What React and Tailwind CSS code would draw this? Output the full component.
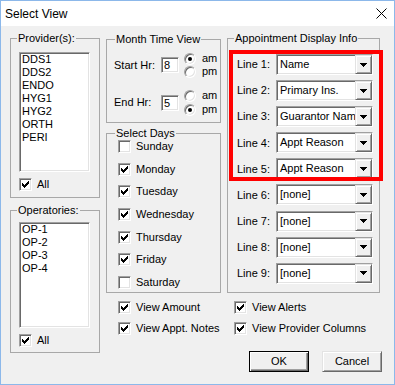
import React from "react";

const sunken =
  "border border-t-[#a0a0a0] border-l-[#a0a0a0] border-r-white border-b-white shadow-[inset_1px_1px_0_#696969,inset_-1px_-1px_0_#e3e3e3] bg-white";
const raised =
  "border border-t-[#e3e3e3] border-l-[#e3e3e3] border-r-[#696969] border-b-[#696969] shadow-[inset_1px_1px_0_#ffffff,inset_-1px_-1px_0_#a0a0a0] bg-[#f0f0f0]";

// classic 7x7 check glyph, pixel rows
const checkRows = [
  [6, 1],
  [5, 2],
  [0, 1, 4, 3],
  [0, 2, 3, 3],
  [0, 5],
  [1, 3],
  [2, 1],
];

function Check({ checked }) {
  return (
    <span className={`w-[13px] h-[13px] shrink-0 flex items-center justify-center ${sunken}`}>
      {checked && (
        <svg width="7" height="7" viewBox="0 0 7 7" shapeRendering="crispEdges">
          {checkRows.map((r, y) => (
            <g key={y}>
              <rect x={r[0]} y={y} width={r[1]} height="1" fill="#000" />
              {r.length > 2 && <rect x={r[2]} y={y} width={r[3]} height="1" fill="#000" />}
            </g>
          ))}
        </svg>
      )}
    </span>
  );
}

function CheckRow({ checked, label }) {
  return (
    <div className="flex items-center gap-[5px] h-[13px]">
      <Check checked={checked} />
      <span className="leading-[13px]">{label}</span>
    </div>
  );
}

function Radio({ checked, label }) {
  return (
    <div className="flex items-center gap-[6px] h-[13px]">
      <span className="w-[12px] h-[12px] shrink-0 rounded-full border border-t-[#a0a0a0] border-l-[#a0a0a0] border-r-white border-b-white bg-white shadow-[inset_1px_1px_0_#696969,inset_-1px_-1px_0_#e3e3e3] flex items-center justify-center">
        {checked && <span className="w-[4px] h-[4px] rounded-full bg-black" />}
      </span>
      <span className="leading-[13px]">{label}</span>
    </div>
  );
}

function Combo({ label, value }) {
  return (
    <div className="flex items-center h-[21px]">
      <span className="w-[39px] shrink-0">{label}</span>
      <div className={`w-[97px] h-[21px] flex ${sunken}`}>
        <div className="flex-1 overflow-hidden whitespace-nowrap pl-[3px] leading-[19px]">{value}</div>
        <div className={`w-[17px] h-full shrink-0 flex items-center justify-center ${raised}`}>
          <svg width="7" height="4" viewBox="0 0 7 4" shapeRendering="crispEdges">
            <path d="M0 0H7L3.5 4Z" fill="#000" />
          </svg>
        </div>
      </div>
    </div>
  );
}

function ListBox({ items, height }) {
  return (
    <div className={`w-[71px] ${height} ${sunken} px-[2px]`}>
      {items.map((it) => (
        <div key={it} className="leading-[13px]">
          {it}
        </div>
      ))}
    </div>
  );
}

export default function App() {
  return (
    <div className="w-[395px] h-[385px] border border-[#8cb8ea] flex flex-col text-[11px] text-black font-['Liberation_Sans',Arial,sans-serif] overflow-hidden">
      {/* title bar */}
      <div className="h-[25px] bg-white flex items-center justify-between pl-[4px] pr-[7px]">
        <span className="text-[12px]">Select View</span>
        <svg width="11" height="11" viewBox="0 0 11 11">
          <path d="M0.5 0.5L10.5 10.5M10.5 0.5L0.5 10.5" stroke="#000" strokeWidth="1" />
        </svg>
      </div>

      {/* body */}
      <div className="flex-1 bg-[#f0f0f0] flex pl-[9px]">
        {/* left column */}
        <div className="w-[90px] flex flex-col">
          <fieldset className="mt-[6px] h-[166px] border border-[#a8a8a8] pl-[8px] pt-[7px]">
            <legend className="ml-[-2px] px-[1px] leading-[13px]">Provider(s):</legend>
            <ListBox items={["DDS1", "DDS2", "ENDO", "HYG1", "HYG2", "ORTH", "PERI"]} height="h-[120px]" />
            <div className="mt-[6px]">
              <CheckRow checked label="All" />
            </div>
          </fieldset>
          <fieldset className="mt-[6px] h-[149px] border border-[#a8a8a8] pl-[8px] pt-[5px]">
            <legend className="ml-[-2px] px-[1px] leading-[13px]">Operatories:</legend>
            <ListBox items={["OP-1", "OP-2", "OP-3", "OP-4"]} height="h-[106px]" />
            <div className="mt-[6px]">
              <CheckRow checked label="All" />
            </div>
          </fieldset>
        </div>

        {/* right area */}
        <div className="w-[276px] ml-[6px] flex flex-col">
          <div className="flex gap-[6px]">
            {/* middle column */}
            <div className="w-[115px] flex flex-col">
              <fieldset className="mt-[7px] h-[90px] border border-[#a8a8a8] pl-[7px] pt-[6px]">
                <legend className="ml-[1px] px-[1px] leading-[13px]">Month Time View</legend>
                <div className="flex items-center">
                  <span className="w-[47px]">Start Hr:</span>
                  <div className={`w-[18px] h-[16px] pl-[2px] leading-[14px] ${sunken}`}>8</div>
                  <div className="ml-[5px] flex flex-col">
                    <Radio checked label="am" />
                    <Radio label="pm" />
                  </div>
                </div>
                <div className="flex items-center mt-[11px]">
                  <span className="w-[47px]">End Hr:</span>
                  <div className={`w-[18px] h-[16px] pl-[2px] leading-[14px] ${sunken}`}>5</div>
                  <div className="ml-[5px] flex flex-col gap-[1px]">
                    <Radio label="am" />
                    <Radio checked label="pm" />
                  </div>
                </div>
              </fieldset>
              <fieldset className="mt-[4px] h-[166px] border border-[#a8a8a8] pl-[11px]">
                <legend className="ml-[-3px] px-[1px] leading-[13px]">Select Days</legend>
                <div className="flex flex-col gap-[9.67px]">
                  <CheckRow label="Sunday" />
                  <CheckRow checked label="Monday" />
                  <CheckRow checked label="Tuesday" />
                  <CheckRow checked label="Wednesday" />
                  <CheckRow checked label="Thursday" />
                  <CheckRow checked label="Friday" />
                  <CheckRow label="Saturday" />
                </div>
              </fieldset>
            </div>

            {/* right column */}
            <fieldset className="mt-[6px] w-[153px] h-[261px] border border-[#a8a8a8] pl-[9px] pt-[9px]">
              <legend className="ml-[-3px] px-[1px] leading-[13px]">Appointment Display Info</legend>
              <div className="relative flex flex-col gap-[5.1px]">
                <Combo label="Line 1:" value="Name" />
                <Combo label="Line 2:" value="Primary Ins." />
                <Combo label="Line 3:" value="Guarantor Name" />
                <Combo label="Line 4:" value="Appt Reason" />
                <Combo label="Line 5:" value="Appt Reason" />
                <div className="absolute -left-[8px] -top-[4px] -right-[4px] -bottom-[2px] border-4 border-[#ff0000] pointer-events-none" />
              </div>
              <div className="mt-[5.1px] flex flex-col gap-[5.1px]">
                <Combo label="Line 6:" value="[none]" />
                <Combo label="Line 7:" value="[none]" />
                <Combo label="Line 8:" value="[none]" />
                <Combo label="Line 9:" value="[none]" />
              </div>
            </fieldset>
          </div>

          {/* options */}
          <div className="mt-[8px] pl-[12px] grid grid-cols-[116px_1fr] gap-y-[8px]">
            <CheckRow checked label="View Amount" />
            <CheckRow checked label="View Alerts" />
            <CheckRow checked label="View Appt. Notes" />
            <CheckRow checked label="View Provider Columns" />
          </div>

          {/* buttons */}
          <div className="mt-[16px] flex justify-end gap-[13px]">
            <button className="w-[60px] h-[21px] border border-black bg-[#f0f0f0] shadow-[inset_1px_1px_0_#ffffff,inset_-1px_-1px_0_#696969,inset_-2px_-2px_0_#a0a0a0] leading-[19px]">
              OK
            </button>
            <button className={`w-[60px] h-[21px] leading-[19px] ${raised}`}>Cancel</button>
          </div>
        </div>
      </div>
    </div>
  );
}
